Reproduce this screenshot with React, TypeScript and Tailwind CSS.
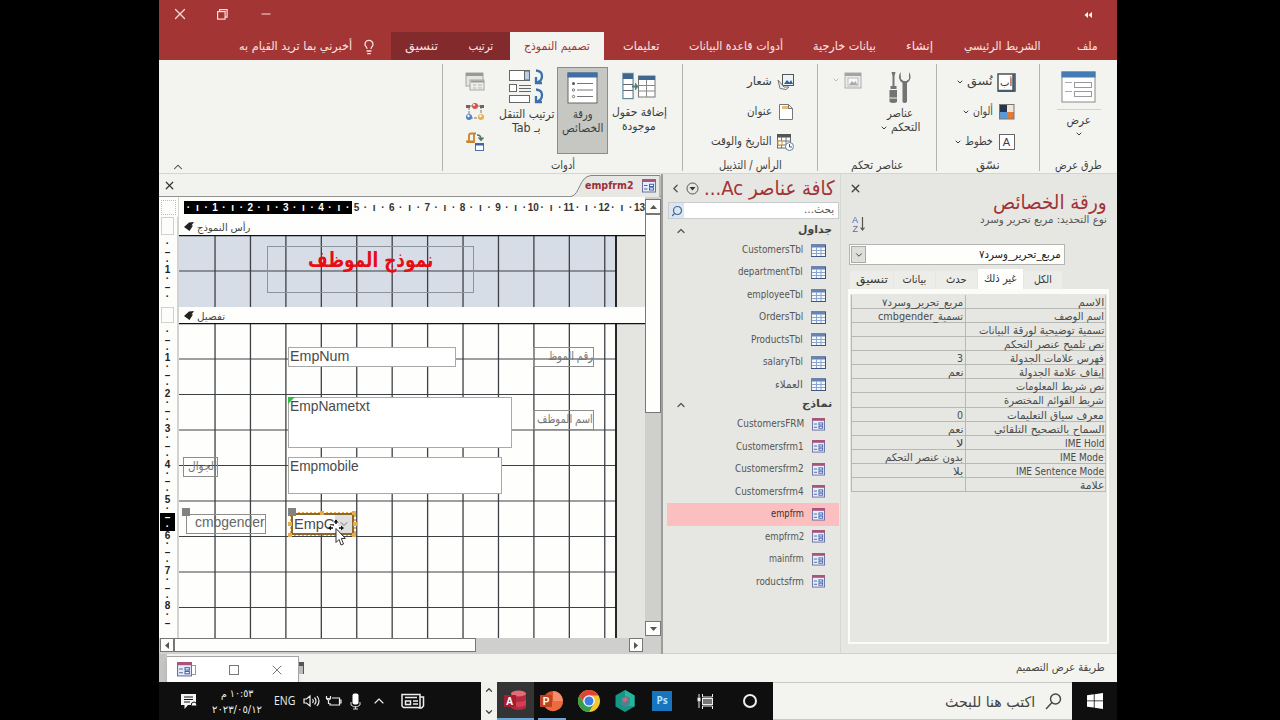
import { useLayoutEffect, useRef, useState } from "react"
import type { ReactNode } from "react"
import { ChevronDown, ChevronLeft, ChevronUp, Lightbulb, Minus, Search, X } from "lucide-react"

type FitProps = { w: number; children: ReactNode; className?: string; dir?: "rtl" | "ltr" }

// Squeezes a label horizontally so that it takes exactly w pixels
function Fit({ w, children, className = "", dir = "rtl" }: FitProps) {
  const ref = useRef<HTMLSpanElement>(null)
  const [scale, setScale] = useState(1)

  useLayoutEffect(() => {
    if (ref.current) setScale(w / ref.current.offsetWidth)
  }, [w, children])

  return (
    <span dir="ltr" className={`flex shrink-0 items-center whitespace-nowrap ${className}`} style={{ width: w }}>
      <span ref={ref} dir={dir} className="inline-block shrink-0 origin-left" style={{ transform: `scaleX(${scale})` }}>
        {children}
      </span>
    </span>
  )
}

function TableIcon() {
  return (
    <svg width="15" height="13" viewBox="0 0 15 13" className="shrink-0">
      <rect x="0.5" y="0.5" width="14" height="12" fill="#f4f8fd" stroke="#6d83a8" />
      <rect x="1" y="1" width="13" height="2.5" fill="#6684b4" />
      <path d="M1 6.5h13M1 9.5h13M5.5 3v9M10 3v9" stroke="#8aa6cf" />
      <path d="M0 12.5h15M14.5 1v12" stroke="#3f5580" />
    </svg>
  )
}

function FormIcon({ size = 14 }: { size?: number }) {
  return (
    <svg width={size} height={size} viewBox="0 0 14 14" className="shrink-0">
      <rect x="0.5" y="0.5" width="13" height="12.5" fill="#e6edf9" stroke="#6b6f9e" />
      <rect x="0" y="0" width="14" height="3" fill="#a6557b" />
      <path d="M2 6.5h3.5M2 10h3.5" stroke="#4a66a8" />
      <rect x="7.5" y="5.3" width="4" height="2.2" fill="#fff" stroke="#3e5fae" />
      <rect x="7.5" y="8.8" width="4" height="2.2" fill="#fff" stroke="#3e5fae" />
    </svg>
  )
}

function TitleBar() {
  return (
    <div className="flex h-8 items-center bg-[#a33635] text-[#fbdcda]">
      <X className="ml-3 size-[18px] -translate-y-0.5" strokeWidth={1.6} />
      <svg width="11" height="11" viewBox="0 0 11 11" className="ml-[28px] -translate-y-[2px]" fill="none" stroke="#fbdcda" strokeWidth="1.200">
        <rect x="0.600" y="2.600" width="7.500" height="7.500" />
        <path d="M2.600 2.600V.6h7.500v7.500H8" />
      </svg>
      <Minus className="ml-[31px] size-[14px] -translate-y-0.5" strokeWidth={1.8} />
      <svg width="8" height="6" viewBox="0 0 8 6" className="ml-[811px] -translate-y-px">
        <path d="M4 0v6L0.5 3zM8 0v6L4.500 3z" fill="#fff" />
      </svg>
    </div>
  )
}

const tabs = [
  { text: "تنسيق", w: 33, cell: "w-[61px] bg-[#832a2d]" },
  { text: "ترتيب", w: 25, cell: "w-[58px] bg-[#832a2d]" },
  { text: "تصميم النموذج", w: 66, cell: "w-[94px] bg-[#f3f4ef] text-[#9c3437]" },
  { text: "تعليمات", w: 36, cell: "w-[74px]" },
  { text: "أدوات قاعدة البيانات", w: 94, cell: "w-[116px]" },
  { text: "بيانات خارجية", w: 63, cell: "w-[101px]" },
  { text: "إنشاء", w: 27, cell: "w-[49px]" },
  { text: "الشريط الرئيسي", w: 77, cell: "w-[116px]" },
  { text: "ملف", w: 21, cell: "w-[54px]" },
]

function TabBar() {
  return (
    <div className="flex h-7 bg-[#a33635] text-[11.5px] text-[#fbe4e2]">
      <div className="flex w-[232px] items-center pt-[2px]">
        <Fit w={113} className="ml-[80px]">أخبرني بما تريد القيام به</Fit>
        <Lightbulb className="ml-[9px] size-4" strokeWidth={1.9} />
      </div>
      {tabs.map((t) => (
        <div key={t.text} className={`flex items-center justify-center pt-[2px] ${t.cell}`}>
          <Fit w={t.w}>{t.text}</Fit>
        </div>
      ))}
    </div>
  )
}

function Group({ label, w, className, children }: { label: string; w: number; className: string; children: ReactNode }) {
  return (
    <div className={`my-1 flex h-[107px] flex-col border-l border-[#b4b5b1] ${className}`}>
      <div className="flex h-[94px] shrink-0">{children}</div>
      <div className="flex justify-center">
        <Fit w={w} className="h-[16px]">{label}</Fit>
      </div>
    </div>
  )
}

function ToolsGroup() {
  return (
    <Group label="أدوات" w={24} className="w-[240px]">
      <div className="flex w-[56px] flex-col items-end gap-[10px] pt-2 pr-[14px]">
        <svg width="20" height="20" viewBox="0 0 20 20">
          <rect x="1" y="1" width="17" height="13" fill="#e4e4e2" stroke="#a6a6a6" />
          <path d="M1 2.500h17" stroke="#999" strokeWidth="3" />
          <rect x="5" y="8" width="14" height="10" fill="#ededeb" stroke="#a6a6a6" />
          <path d="M6 9.500h13" stroke="#999" strokeWidth="2" />
          <path d="M8 13h3M13 13h4M8 16h3M13 16h4" stroke="#b5b5b5" />
        </svg>
        <svg width="20" height="20" viewBox="0 0 20 20">
          <path d="M4 4h12v12H4z" fill="none" stroke="#777" strokeDasharray="3 1" />
          <path d="M1 3h4v3H1zM15 3h4v3h-4z" fill="#7a6258" />
          <circle cx="10" cy="4" r="3" fill="#d5564b" />
          <circle cx="4" cy="15" r="3" fill="#4d82c0" />
          <circle cx="16" cy="15" r="3" fill="#e8b04b" />
          <circle cx="9" cy="3" r="1" fill="#fff" />
          <circle cx="3.500" cy="14" r="1.200" fill="#fff" />
          <circle cx="15.500" cy="14" r="1.200" fill="#fff" />
        </svg>
        <svg width="20" height="20" viewBox="0 0 20 20">
          <path d="M4 10V3.500Q4 1.500 6 1.500h5M9 2v8H2" fill="none" stroke="#c9832f" strokeWidth="1.800" />
          <path d="M1 9.500h7" stroke="#c9832f" strokeWidth="2" />
          <path d="M12 3q4 0 4 4M13.500 5.500L16 8l2.500-2.500" fill="none" stroke="#51746e" strokeWidth="1.600" />
          <rect x="10.500" y="11.500" width="8" height="7" fill="#fff" stroke="#4b6fae" />
          <path d="M10 12.500h9" stroke="#3c62a6" strokeWidth="2" />
        </svg>
      </div>
      <div className="flex w-[58px] flex-col items-center pt-[5px] pr-1">
        <svg width="36" height="35" viewBox="0 0 36 35">
          <rect x="1.500" y="1.500" width="20" height="10" fill="#fff" stroke="#666" />
          <rect x="16.500" y="2" width="5" height="9" fill="#b8cde6" stroke="#666" />
          <rect x="1.500" y="15.500" width="7" height="7" fill="#fff" stroke="#666" />
          <path d="M11 16.500h12M11 19.500h12M11 22.500h12" stroke="#666" />
          <rect x="1.500" y="26.500" width="20" height="7" fill="#fff" stroke="#666" />
          <path
            d="M28 1.500Q34 2 34 7t-5 6.500M28 8v6h6M28 20.500q6 .5 6 5.500t-5 6.500M28 27v6h6"
            fill="none"
            stroke="#3a70ae"
            strokeWidth="2.300"
          />
        </svg>
        <Fit w={55} className="mt-1 h-[14px]">ترتيب التنقل</Fit>
        <Fit w={29} className="h-[14px]">بـ Tab</Fit>
      </div>
      <div className="mt-[3px] flex h-[87px] w-[51px] flex-col items-center border border-[#8b8c89] bg-[#c6c7c3] pt-1">
        <svg width="31" height="32" viewBox="0 0 31 32">
          <rect x="1" y="1" width="29" height="30" fill="#fff" stroke="#666" />
          <rect x="0.500" y="0.500" width="30" height="5" fill="#3f6ea9" />
          <path d="M10 11.500h16M10 18h16M10 24.500h16" stroke="#777" />
          <circle cx="6.500" cy="11.500" r="1.500" fill="#555" />
          <circle cx="6.500" cy="18" r="1.200" fill="#fff" stroke="#777" />
          <circle cx="6.500" cy="24.500" r="1.200" fill="#fff" stroke="#777" />
        </svg>
        <Fit w={20} className="mt-1 h-[14px]">ورقة</Fit>
        <Fit w={41} className="h-[14px]">الخصائص</Fit>
      </div>
      <div className="flex w-[62px] flex-col items-center pt-[8px]">
        <svg width="34" height="28" viewBox="0 0 34 28">
          <rect x="0" y="0.500" width="12" height="27" fill="#b5cfe0" />
          <rect x="1" y="1.500" width="10" height="25" fill="#fff" stroke="#5d8797" />
          <rect x="1" y="2" width="10" height="5" fill="#40688e" />
          <path d="M1 12.500h10M1 18.500h10" stroke="#667" />
          <rect x="16.500" y="4" width="16.500" height="21" fill="#fff" stroke="#777" />
          <rect x="16.500" y="4" width="16.500" height="4" fill="#40688e" />
          <path d="M16 13.500h17M16 19h17M24.500 8v17" stroke="#888" />
          <path d="M10 13.500h3v-3l3.500 4-3.500 4v-3h-3z" fill="#4b8474" />
        </svg>
        <Fit w={55} className="mt-[6px] h-[14px]">إضافة حقول</Fit>
        <Fit w={34} className="h-[14px]">موجودة</Fit>
      </div>
    </Group>
  )
}

function SmallRow({ text, w, arrow, children }: { text: string; w: number; arrow?: boolean; children: ReactNode }) {
  return (
    <div className="flex h-[30px] items-center justify-end">
      {arrow && <ChevronDown className="mr-[3px] size-2" strokeWidth={3} />}
      <Fit w={w}>{text}</Fit>
      <div className="ml-1 flex w-[19px] justify-center">{children}</div>
    </div>
  )
}

function Ribbon() {
  return (
    <div className="flex h-[114px] border-b border-[#d4d5d0] bg-[#f3f4ef] text-[11.5px] text-[#3d3d3d]">
      <div className="flex w-[283px] items-end pl-3">
        <ChevronUp className="size-3.5 translate-y-px" strokeWidth={1.8} />
      </div>
      <ToolsGroup />
      <Group label="الرأس / التذييل" w={63} className="w-[135px]">
        <div className="flex w-[112px] flex-col pt-[3px]">
          <SmallRow text="شعار" w={25}>
            <svg width="18" height="18" viewBox="0 0 18 18">
              <rect x="5.500" y="1.500" width="11" height="11" fill="#eef3f8" stroke="#555" />
              <path d="M7 11l3-4 2.500 2.500L14 7l2 4z" fill="#2d629c" />
              <path d="M1 7l6 7 5 0-3 2.500-6-1z" fill="#eee" stroke="#777" />
            </svg>
          </SmallRow>
          <SmallRow text="عنوان" w={25}>
            <svg width="16" height="18" viewBox="0 0 16 18">
              <path d="M1.500 1.500h9l4 4v11h-13z" fill="#fff" stroke="#777" />
              <path d="M4 3h6l3 3H4z" fill="#e6ba7d" />
              <path d="M10.500 1.500v4h4" fill="none" stroke="#777" />
            </svg>
          </SmallRow>
          <SmallRow text="التاريخ والوقت" w={61}>
            <svg width="19" height="19" viewBox="0 0 19 19">
              <rect x="1.500" y="2" width="13" height="13" fill="#fff" stroke="#666" />
              <rect x="1" y="1" width="14" height="3.500" fill="#555" />
              <path d="M5.500 4v11M10 4v11M1 8h14M1 12h14" stroke="#777" />
              <rect x="2" y="8" width="4" height="4" fill="#fff" stroke="#cc942e" />
              <circle cx="13.500" cy="13.500" r="4" fill="#fff" stroke="#5d82a7" />
              <path d="M13.500 11v3h2.500" fill="none" stroke="#456" />
            </svg>
          </SmallRow>
        </div>
      </Group>
      <Group label="عناصر تحكم" w={52} className="w-[119px]">
        <div className="flex w-[56px] items-start pt-2 pl-[14px]">
          <ChevronDown className="mt-1 mr-1 size-2 text-[#bbb]" strokeWidth={3} />
          <svg width="18" height="17" viewBox="0 0 18 17">
            <rect x="1" y="1" width="16" height="15" fill="#ececea" stroke="#adadad" />
            <path d="M1 2.500h16" stroke="#a3a3a3" strokeWidth="3" />
            <rect x="4" y="6" width="10" height="8" fill="#f8f8f8" stroke="#bbb" />
            <path d="M5 13l3-4 2 2 1.500-2 2 4z" fill="#aaa" />
          </svg>
        </div>
        <div className="flex flex-col items-center pt-[7px] pl-[6px]">
          <svg width="24" height="33" viewBox="0 0 24 33" fill="#737373">
            <path d="M3.500 1h4l-1 4v10h-2V5zM2.500 15h6v3h-6zM1.500 19h7.500v12q-3.500 2-7.500 0z" />
            <path d="M1.500 27h8" stroke="#f3f4ef" />
            <path d="M12.500 1q-2 3-1.500 6t3.500 5V31q2 2 4.500 0V12q3-2 3.500-5T21 1v7l-2.500 2h-3L13 8z" />
          </svg>
          <Fit w={26} className="mt-[3px] h-[14px]">عناصر</Fit>
          <div className="flex items-center">
            <ChevronDown className="mr-[3px] size-2" strokeWidth={3} />
            <Fit w={29} className="h-[14px]">التحكم</Fit>
          </div>
        </div>
      </Group>
      <Group label="نسّق" w={24} className="w-[103px]">
        <div className="flex w-[79px] flex-col pt-[3px]">
          <SmallRow arrow text="نُسق" w={26}>
            <svg width="19" height="19" viewBox="0 0 19 19">
              <rect x="1" y="1" width="17" height="17" fill="#fff" stroke="#4b5157" strokeWidth="1.500" />
              <path d="M16.500 1v17H1" fill="none" stroke="#4b5a6a" strokeWidth="2.500" />
              <text x="3" y="13" fontSize="10" fill="#333" fontFamily="DejaVu Sans">أب</text>
            </svg>
          </SmallRow>
          <SmallRow arrow text="ألوان" w={20}>
            <svg width="16" height="16" viewBox="0 0 16 16">
              <path d="M0 0h8v8H0z" fill="#28334c" />
              <path d="M8 0h7v8H8z" fill="#efe6da" />
              <path d="M0 8h8v7H0z" fill="#5b99d5" />
              <path d="M8 8h7v7H8z" fill="#e27a34" />
              <rect x="0.500" y="0.500" width="14.500" height="14.500" fill="none" stroke="#777" />
            </svg>
          </SmallRow>
          <SmallRow arrow text="خطوط" w={28}>
            <span className="flex size-4 items-center justify-center border border-[#666] bg-white font-['Liberation_Sans'] text-[11px] leading-none">
              A
            </span>
          </SmallRow>
        </div>
      </Group>
      <Group label="طرق عرض" w={47} className="w-[78px]">
        <div className="flex w-full flex-col items-center pt-[7px]">
          <svg width="35" height="32" viewBox="0 0 35 32">
            <rect x="1" y="1" width="33" height="30" fill="#fff" stroke="#888" />
            <rect x="0.500" y="0.500" width="34" height="6" fill="#437bb5" />
            <rect x="13.500" y="11.500" width="17" height="5" fill="#fff" stroke="#999" />
            <rect x="13.500" y="20.500" width="17" height="5" fill="#fff" stroke="#999" />
            <path d="M4 11.500h7M4 20.500h7" stroke="#aaa" />
          </svg>
          <div className="mt-[6px] w-[44px] border-t border-[#d2d3ce]" />
          <Fit w={24} className="mt-[4px] h-[14px]">عرض</Fit>
          <ChevronDown className="mt-[2px] size-2" strokeWidth={3} />
        </div>
      </Group>
    </div>
  )
}

const rulerMark = (k: number, tick: string) => (k % 4 === 0 ? String(k / 4) : k % 2 === 0 ? tick : "·")

function TopRuler() {
  const marks = Array.from({ length: 52 }, (_, i) => i + 1)
  return (
    <div className="flex h-[20px] items-center overflow-hidden bg-[#fdfdfb]">
      <div className="ml-0.5 h-[15px] w-[15px] border border-dotted border-[#bbb]" />
      <div className="ml-[2px] h-full w-[6px] border-l border-[#d5d5d2]" />
      <div className="flex h-[13px] font-['Liberation_Sans'] text-[10px] font-semibold">
        {marks.map((k) => (
          <span
            key={k}
            className={`flex w-[8.857px] items-center justify-center overflow-visible ${k < 20 ? "bg-black text-white" : "text-[#333]"}`}
          >
            {rulerMark(k, "ı")}
          </span>
        ))}
      </div>
    </div>
  )
}

function SideMarks({ count }: { count: number }) {
  const marks = Array.from({ length: count }, (_, i) => i + 1)
  return (
    <div className="flex flex-col pt-[4.4px]">
      {marks.map((k) => (
        <span
          key={k}
          className={`flex h-[8.87px] w-[15px] shrink-0 items-center justify-center ${count > 8 && (k === 22 || k === 23) ? "bg-black text-white" : "text-[#222]"}`}
        >
          {rulerMark(k, "–")}
        </span>
      ))}
    </div>
  )
}

function SideRuler() {
  return (
    <div className="flex h-[421px] w-[20px] flex-col overflow-hidden border-r-2 border-[#d3d3d0] bg-[#fdfdfb] pl-px font-['Liberation_Sans'] text-[10px] leading-none font-semibold">
      <div className="ml-px h-[18px] w-[13px] shrink-0 border border-[#d0d0cd]" />
      <div className="h-[72px] shrink-0">
        <SideMarks count={7} />
      </div>
      <div className="ml-px h-[16px] w-[13px] shrink-0 border border-[#d0d0cd]" />
      <SideMarks count={34} />
    </div>
  )
}

function SectionBar({ text, w }: { text: string; w: number }) {
  return (
    <div className="flex h-full items-center bg-[#fefefc] pt-0.5 text-[10px] text-[#444]">
      <svg width="10" height="10" viewBox="0 0 10 10" className="mr-[3px] ml-[5px]">
        <path d="M0 5l5-4.500L10 0 7.500 3.500H9L5.500 9z" fill="#222" />
      </svg>
      <Fit w={w}>{text}</Fit>
    </div>
  )
}

const columns = Array.from({ length: 12 }, (_, i) => 0.6 + 35.43 * (i + 1))

function Grid({ height, fill }: { height: number; fill: string }) {
  const rows = Array.from({ length: Math.floor(height / 35.5) }, (_, i) => 0.5 + 35.5 * (i + 1)).filter((y) => y < height - 3)
  return (
    <svg width="466" height={height} className="block">
      <rect width="437" height={height} fill={fill} />
      <rect x="437" width="29" height={height} fill="#e4e5e0" />
      {columns.map((x) => (
        <path key={x} d={`M${x} 0V${height}`} stroke="#3d4145" strokeWidth="1.300" />
      ))}
      {rows.map((y) => (
        <path key={y} d={`M0 ${y}H437`} stroke="#3d4145" strokeWidth="1.200" />
      ))}
      <path d={`M437 0V${height}`} stroke="#111" strokeWidth="1.800" />
      <path d="M0 0.500H466" stroke="#111" strokeWidth="1.600" />
    </svg>
  )
}

function FormCanvas() {
  return (
    <div className="relative h-[421px] w-[466px] overflow-hidden font-['Liberation_Sans','DejaVu_Sans',sans-serif] text-[14.5px] leading-[17px] text-[#4a4a4a]">
      <div className="h-[18px]"><SectionBar text="رأس النموذج" w={53} /></div>
      <Grid height={72} fill="#d7dde7" />
      <div className="h-[16px]"><SectionBar text="تفصيل" w={28} /></div>
      <Grid height={315} fill="#fefefd" />

      <div className="absolute top-[29px] left-[88px] h-[47px] w-[207px] border border-[#8c939b]">
        <Fit w={125} className="ml-[40px] h-[27px] font-['DejaVu_Sans'] text-[21px] font-bold text-[#e80c14]">نموذج الموظف</Fit>
      </div>

      <div className="absolute top-[130px] left-[109px] h-[20px] w-[168px] border border-[#a9a9a9] bg-white pl-px">
        <Fit w={59} dir="ltr">EmpNum</Fit>
      </div>
      <div className="absolute top-[130px] left-[354px] flex h-[20px] w-[61px] justify-end border border-[#8d8d8d]">
        <Fit w={45} className="h-[16px] text-[12px] text-[#777]">رقم الموظ</Fit>
      </div>

      <div className="absolute top-[180px] left-[109px] h-[51px] w-[224px] border border-[#a9a9a9] bg-white pl-px">
        <Fit w={80} dir="ltr">EmpNametxt</Fit>
      </div>
      <svg width="7" height="7" className="absolute top-[180px] left-[109px]"><path d="M0 0h7L0 7z" fill="#2fc043" /></svg>
      <div className="absolute top-[193px] left-[354px] flex h-[20px] w-[61px] justify-end border border-[#8d8d8d]">
        <Fit w={56} className="h-[16px] text-[12px] text-[#777]">اسم الموظف</Fit>
      </div>

      <div className="absolute top-[240px] left-[4px] flex h-[20px] w-[35px] justify-end border border-[#8d8d8d]">
        <Fit w={29} className="h-[16px] text-[12px] text-[#777]">الجوال</Fit>
      </div>
      <div className="absolute top-[240px] left-[109px] h-[37px] w-[214px] border border-[#a9a9a9] bg-white pl-px">
        <Fit w={69} dir="ltr">Empmobile</Fit>
      </div>

      <div className="absolute top-[297px] left-[7px] flex h-[20px] w-[80px] justify-end border border-[#8d8d8d] text-[#666]">
        <Fit w={70} dir="ltr" className="h-[15px]">cmbgender</Fit>
      </div>
      <div className="absolute top-[291px] left-[3px] size-2 bg-[#828282]" />

      <div className="absolute top-[295px] left-[111px] h-[24px] w-[66px] border-2 border-dotted border-[#e5ab4e]" />
      <div className="absolute top-[296px] left-[112px] flex h-[22px] w-[63px] items-center border-2 border-[#8a692f] bg-white pl-px">
        <Fit w={41} dir="ltr">EmpG</Fit>
        <div className="flex h-full flex-1 items-center justify-center bg-[#dfdfdf]">
          <ChevronDown className="size-3 text-[#777]" strokeWidth={2} />
        </div>
      </div>
      <div className="absolute top-[291px] left-[109px] size-2 bg-[#828282]" />
      <div className="absolute top-[294px] left-[141px] size-1 bg-[#e5ab4e]" />
      <div className="absolute top-[294px] left-[173px] size-1 bg-[#e5ab4e]" />
      <div className="absolute top-[305px] left-[174px] size-1 bg-[#e5ab4e]" />
      <div className="absolute top-[316px] left-[173px] size-1 bg-[#e5ab4e]" />
      <div className="absolute top-[305px] left-[109px] size-1 bg-[#e5ab4e]" />
      <div className="absolute top-[316px] left-[109px] size-1 bg-[#e5ab4e]" />

      <svg width="20" height="28" viewBox="0 0 20 28" className="absolute top-[302px] left-[148px]">
        <path d="M9 1v8M2 9h14" stroke="#fff" strokeWidth="4" />
        <path d="M9 1v4M3 9h3M12 9h3" stroke="#111" strokeWidth="1.500" />
        <path d="M6.500 3.500L9 .5l2.500 3zM4 6.500L1 9l3 2.500zM14 6.500L17 9l-3 2.500z" fill="#111" />
        <path d="M9 9.500v14l3-3 2 5.500 2.500-1-2.200-5.500h4z" fill="#fff" stroke="#333" />
      </svg>
    </div>
  )
}

const scrollButton = "flex shrink-0 items-center justify-center border border-[#777] bg-[#fdfdfb] text-[#555]"

function Designer() {
  return (
    <div className="flex h-[480px] w-[504px] flex-col border-r-2 border-[#9d9e9b]">
      <div className="flex h-[23px] justify-between border-b border-[#929390] bg-[#f2f3ee]">
        <X className="mt-[5px] ml-1 size-[13px] text-[#333]" strokeWidth={2.2} />
        <div className="relative h-[23px] w-[90px]">
          <svg width="90" height="23" className="absolute inset-0">
            <path d="M0 22.500C9 21 8 2.500 20 1.500H89V23H0z" fill="#e7e8e3" />
            <path d="M0 22.500C9 21 8 2.500 20 1.500H89V23" fill="none" stroke="#858683" />
          </svg>
          <div className="relative flex h-[23px] items-center pt-px pl-[14px]">
            <Fit w={49} dir="ltr" className="text-[11px] font-bold text-[#9b2f35]">empfrm2</Fit>
            <span className="ml-2"><FormIcon size={14} /></span>
          </div>
        </div>
      </div>
      <div className="flex">
        <div className="w-[486px] shrink-0 overflow-hidden">
          <TopRuler />
          <div className="flex">
            <SideRuler />
            <FormCanvas />
          </div>
        </div>
        <div className="flex h-[441px] w-4 shrink-0 flex-col bg-[#cfcfcd] pt-[2px]">
          <div className={`h-[15px] ${scrollButton}`}>
            <svg width="7" height="4"><path d="M0 4L3.500 0 7 4z" fill="#555" /></svg>
          </div>
          <div className="h-[199px] border border-[#777] bg-[#fefefd]" />
          <div className="flex-1" />
          <div className={`mb-[2px] h-[15px] ${scrollButton}`}>
            <svg width="7" height="4"><path d="M0 0h7L3.500 4z" fill="#555" /></svg>
          </div>
        </div>
      </div>
      <div className="flex h-4 bg-[#cfcfcd] pl-px">
        <div className={`h-[14px] w-[14px] ${scrollButton}`}>
          <svg width="4" height="7"><path d="M4 0v7L0 3.500z" fill="#555" /></svg>
        </div>
        <div className="h-[14px] w-[302px] border border-[#777] bg-[#fefefd]" />
        <div className="w-[153px]" />
        <div className={`h-[14px] w-[14px] ${scrollButton}`}>
          <svg width="4" height="7"><path d="M0 0v7l4-3.500z" fill="#555" /></svg>
        </div>
      </div>
    </div>
  )
}

const tables = [
  { name: "CustomersTbl", w: 61 },
  { name: "departmentTbl", w: 65 },
  { name: "employeeTbl", w: 56 },
  { name: "OrdersTbl", w: 44 },
  { name: "ProductsTbl", w: 52 },
  { name: "salaryTbl", w: 40 },
  { name: "العملاء", w: 28 },
]

const forms = [
  { name: "CustomersFRM", w: 67 },
  { name: "Customersfrm1", w: 68 },
  { name: "Customersfrm2", w: 69 },
  { name: "Customersfrm4", w: 69 },
  { name: "empfrm", w: 33 },
  { name: "empfrm2", w: 39 },
  { name: "mainfrm", w: 35 },
  { name: "roductsfrm", w: 48 },
]

function NavHeading({ text, w }: { text: string; w: number }) {
  return (
    <div className="flex h-[17px] items-center justify-between pr-[7px] pl-[8px] text-[11px] font-bold text-[#444]">
      <ChevronUp className="size-3 text-[#555]" strokeWidth={2.5} />
      <Fit w={w}>{text}</Fit>
    </div>
  )
}

function NavPane() {
  return (
    <div className="flex h-[480px] w-[178px] flex-col border-r border-[#d6d7d2] pr-px pl-1 text-[11px] text-[#555]">
      <div className="flex h-[28px] items-center pl-[2px]">
        <ChevronLeft className="size-[13px]" strokeWidth={2.5} />
        <svg width="13" height="13" viewBox="0 0 13 13" className="ml-1">
          <circle cx="6.500" cy="6.500" r="5.500" fill="none" stroke="#555" />
          <path d="M3.500 5h6l-3 3.500z" fill="#333" />
        </svg>
        <Fit w={131} className="ml-[5px] text-[20px] text-[#a23337]">كافة عناصر Ac...</Fit>
      </div>
      <div className="ml-px flex h-[17px] items-center justify-between border border-[#c9cccc] bg-white pr-1">
        <div className="flex h-full w-[15px] items-center justify-center bg-[#dce6ef]">
          <Search className="size-3 text-[#3a66a0]" strokeWidth={2.4} transform="scale(-1 1)" />
        </div>
        <Fit w={30} className="text-[11px]">بحث...</Fit>
      </div>
      <div className="mt-[3px]"><NavHeading text="جداول" w={34} /></div>
      {tables.map((t) => (
        <div key={t.name} className="flex h-[22.45px] shrink-0 items-center justify-end pr-[13px]">
          <Fit w={t.w}>{t.name}</Fit>
          <span className="ml-[8px]"><TableIcon /></span>
        </div>
      ))}
      <NavHeading text="نماذج" w={30} />
      {forms.map((f) => (
        <div
          key={f.name}
          className={`flex h-[22.5px] shrink-0 items-center justify-end pr-[14px] ${f.name === "empfrm" ? "bg-[#fcbfbf] text-[#333]" : ""}`}
        >
          <Fit w={f.w} dir="ltr">{f.name}</Fit>
          <span className="ml-[8px]"><FormIcon size={13} /></span>
        </div>
      ))}
    </div>
  )
}

const properties = [
  { name: "الاسم", w: 26, value: "مربع_تحرير_وسرد٧", vw: 81 },
  { name: "اسم الوصف", w: 50, value: "تسمية_cmbgender", vw: 85 },
  { name: "تسمية توضيحية لورقة البيانات", w: 125 },
  { name: "نص تلميح عنصر التحكم", w: 100 },
  { name: "فهرس علامات الجدولة", w: 94, value: "3", vw: 6 },
  { name: "إيقاف علامة الجدولة", w: 85, value: "نعم", vw: 15 },
  { name: "نص شريط المعلومات", w: 88 },
  { name: "شريط القوائم المختصرة", w: 100 },
  { name: "معرف سياق التعليمات", w: 97, value: "0", vw: 6 },
  { name: "السماح بالتصحيح التلقائي", w: 110, value: "نعم", vw: 15 },
  { name: "IME Hold", w: 39, value: "لا", vw: 7 },
  { name: "IME Mode", w: 44, value: "بدون عنصر التحكم", vw: 78 },
  { name: "IME Sentence Mode", w: 88, value: "بلا", vw: 10 },
  { name: "علامة", w: 24 },
]

const sheetTabs = [
  { text: "تنسيق", w: 32, cell: "w-[43px]" },
  { text: "بيانات", w: 24, cell: "w-[41px]" },
  { text: "حدث", w: 21, cell: "w-[41px]" },
  { text: "غير ذلك", w: 33, cell: "w-[45px] h-[20px] bg-[#fefefc]" },
  { text: "الكل", w: 18, cell: "w-[38px]" },
]

function PropertySheet() {
  return (
    <div className="ml-[7px] flex h-[480px] w-[262px] flex-col">
      <div className="flex h-[68px] justify-between pr-[3px]">
        <div className="flex flex-col pt-2 pl-px">
          <X className="size-[13px] text-[#444]" strokeWidth={2.5} />
          <svg width="18" height="20" viewBox="0 0 18 20" className="mt-[20px] ml-[3px]">
            <text x="0" y="8" fontSize="9" fill="#4a6cb0" fontFamily="Liberation Sans">A</text>
            <text x="0.500" y="17" fontSize="9" fill="#7a5fa8" fontFamily="Liberation Sans">Z</text>
            <path d="M10.500 2v13M8.500 12.500l2 2.500 2-2.500" fill="none" stroke="#555" strokeWidth="1.200" />
          </svg>
        </div>
        <div className="flex flex-col items-end pt-[15px]">
          <Fit w={114} className="h-[25px] text-[20px] text-[#a23337]">ورقة الخصائص</Fit>
          <Fit w={127} className="h-[11px] text-[10.5px] text-[#555]">نوع التحديد: مربع تحرير وسرد</Fit>
        </div>
      </div>
      <div className="mt-[2px] ml-px flex h-[21px] w-[216px] items-center justify-between border border-[#b4b5b2] bg-[#fefefd] pr-[3px] text-[11px] text-[#222]">
        <div className="ml-px flex h-[17px] w-[15px] items-center justify-center border border-[#aaa] bg-[#dededb]">
          <ChevronDown className="size-2.5" strokeWidth={2} />
        </div>
        <Fit w={82} className="h-[17px] leading-[17px]">مربع_تحرير_وسرد٧</Fit>
      </div>
      <div className="mt-[4px] flex h-[20px] items-end gap-px pl-[2px] text-[11px] text-[#333]">
        {sheetTabs.map((t) => (
          <div key={t.text} className={`flex h-[18px] items-center justify-center bg-[#ecede8] pt-px ${t.cell}`}>
            <Fit w={t.w}>{t.text}</Fit>
          </div>
        ))}
      </div>
      <div className="h-[355px] w-[261px] border-2 border-t-[5px] border-[#fbfcf8] px-px pt-px text-[10.5px] text-[#4a4a4a]">
        {properties.map((p) => (
          <div key={p.name} className="flex h-[14.07px] border-b border-[#b7b8b4] leading-[14px]">
            <div className="flex w-[115px] items-center justify-end border-r border-l border-[#b7b8b4] pr-[2px] pt-px">
              {p.value && <Fit w={p.vw!}>{p.value}</Fit>}
            </div>
            <div className="flex flex-1 items-center justify-end border-r border-[#c7c8c4] pt-px pr-[1px]">
              <Fit w={p.w}>{p.name}</Fit>
            </div>
          </div>
        ))}
      </div>
    </div>
  )
}

function StatusBar() {
  return (
    <div className="flex h-7 items-end justify-between bg-[#f3f4ef]">
      <div className="flex h-full items-end">
        <div className="h-full w-2 bg-[#c4c5c2]" />
        <div className="flex h-[26px] w-[132px] items-center border-t border-r border-[#a5a6a3] bg-white shadow-md">
          <span className="ml-[10px]"><FormIcon size={15} /></span>
          <span className="h-2.5 w-1 border border-l-0 border-[#999]" />
          <div className="ml-[33px] size-[10px] border border-[#777]" />
          <X className="ml-[30px] size-4 text-[#777]" strokeWidth={1.5} />
        </div>
        <div className="mb-2 h-3 w-[5px] border-t-4 border-r border-[#555] bg-[#bbb]" />
      </div>
      <Fit w={89} className="mr-3 h-full text-[10.5px] text-[#444]">طريقة عرض التصميم</Fit>
    </div>
  )
}

function OfficeTile({ letter, className, children }: { letter: string; className: string; children: ReactNode }) {
  return (
    <div className="relative size-6">
      <svg width="24" height="24" viewBox="0 0 24 24">{children}</svg>
      <span className={`absolute top-[6px] left-0 flex size-3 items-center justify-center font-['Liberation_Sans'] text-[10px] font-bold text-white ${className}`}>
        {letter}
      </span>
    </div>
  )
}

function Taskbar() {
  return (
    <div className="flex h-[38px] items-center bg-[#0f0f0f] text-[#eee]">
      <div className="flex w-[322px] items-center">
        <svg width="18" height="17" viewBox="0 0 18 17" className="ml-[21px]">
          <path d="M1 1h15v11H8l-3.500 4v-4H1z" fill="#f4f4f4" />
          <path d="M4 4h9M4 6.500h9M4 9h6" stroke="#111" />
          <path d="M11 13q0-4 3-4t3 4zM12.500 14.500h3" fill="#fff" stroke="#111" />
        </svg>
        <div className="ml-[14px] flex w-[50px] flex-col items-center text-[10.5px] leading-4">
          <Fit w={32}>١٠:٥٣ م</Fit>
          <Fit w={50}>٢٠٢٣/٠٥/١٢</Fit>
        </div>
        <Fit w={21} dir="ltr" className="ml-3 font-['Open_Sans'] text-[12px]">ENG</Fit>
        <svg width="18" height="14" viewBox="0 0 18 14" className="ml-[8px]" fill="none" stroke="#eee" strokeWidth="1.200">
          <path d="M1 5h2.500L7 2v10L3.500 9H1zM9.500 5q1.500 2 0 4M11.500 3.500q3 3.500 0 7M14 2q4 5 0 10" />
        </svg>
        <svg width="17" height="13" viewBox="0 0 17 13" className="ml-[4px]" fill="none" stroke="#eee" strokeWidth="1.200">
          <path d="M7 3h7.500v7H5V8M14.500 5h1.500v3h-1.500M1.500 1v2.500q2.500 3 4 0V1M1 3.500h5M3.500 5v4" />
        </svg>
        <svg width="11" height="17" viewBox="0 0 11 17" className="ml-[8px]">
          <rect x="2.500" y="0.500" width="6" height="11" rx="2" fill="#fff" />
          <path d="M1 9v3q4.500 4 9 0V9M5.500 13v3M3 16h5" fill="none" stroke="#ddd" />
        </svg>
        <ChevronUp className="ml-[10px] size-4" strokeWidth={1.7} />
        <svg width="24" height="17" viewBox="0 0 24 17" className="ml-[14px]" fill="none" stroke="#eee" strokeWidth="1.500">
          <path d="M1 1.500h18v13H2.500L1 13zM19 4h3.500v9l-2 2h-3M4 4.500h12M12 8h5M12 11h5" />
          <path d="M4.500 8h5v3.500h-5z" />
        </svg>
      </div>
      <div className="flex h-full w-[16px] flex-col items-center justify-between bg-[#f1f2ee] py-[3px] text-[#444]">
        <ChevronUp className="size-2.5" strokeWidth={3} />
        <ChevronDown className="size-2.5" strokeWidth={3} />
      </div>
      <div className="flex h-full w-[37px] items-center justify-center border-b-2 border-[#6ca5d3] bg-[#343434] pt-[2px]">
        <OfficeTile letter="A" className="bg-[#a51d2f]">
          <path d="M7 4v15q7.500 4 15 0V4z" fill="#b52a41" />
          <ellipse cx="14.500" cy="4.500" rx="7.500" ry="3" fill="#e56b78" />
          <path d="M7 11q7.500 4 15 0v5q-7.500 4-15 0z" fill="#d43e54" />
        </OfficeTile>
      </div>
      <div className="mx-1 flex h-full w-[28px] items-center justify-center border-b-2 border-[#6ca5d3] pt-[2px]">
        <OfficeTile letter="P" className="bg-[#c2411f]">
          <circle cx="13" cy="12" r="10" fill="#d9532f" />
          <path d="M13 2a10 10 0 0 1 10 10H13z" fill="#f48e6b" />
          <path d="M23 12a10 10 0 0 1-18 6l8-6z" fill="#eb6b40" />
        </OfficeTile>
      </div>
      <svg width="24" height="24" viewBox="0 0 24 24" className="ml-[7px]">
        <circle cx="12" cy="12" r="11" fill="#f5c72e" />
        <path d="M2.500 6.500A11 11 0 0 1 21.500 6.500H12L7 14z" fill="#df4537" />
        <path d="M2.500 6.500A11 11 0 0 0 12 23l5-8.500-10 0z" fill="#359c50" />
        <circle cx="12" cy="12" r="5.800" fill="#fff" />
        <circle cx="12" cy="12" r="4.500" fill="#3d7de8" />
      </svg>
      <svg width="22" height="22" viewBox="0 0 22 22" className="ml-[13px]">
        <path d="M11 0l9.500 5.500v11L11 22l-9.500-5.500v-11z" fill="#159785" />
        <path d="M11 0l9.500 5.500v11L11 15z" fill="#24b79c" />
        <path d="M7 9l5-3 4 2v6l-5 3-4-3z" fill="#557f91" />
        <path d="M8 9l4-2 2 3-4 2z" fill="#d76478" />
      </svg>
      <div className="ml-[16px] flex size-5 items-start justify-center bg-[#1675bd] pt-0.5 font-['Open_Sans'] text-[10px] leading-[14px] font-bold text-[#b6e2fc]">
        Ps
      </div>
      <svg width="17" height="15" viewBox="0 0 17 15" className="ml-[25px]" fill="none" stroke="#eee">
        <path d="M2 0v3M2 8v6M5.500 0v3h10V0M5.500 15v-3h10v3" />
        <rect x="5.500" y="4.500" width="10" height="6" fill="#777" />
        <rect x="1" y="4" width="2" height="3" fill="#fff" />
      </svg>
      <div className="ml-[29px] size-[14px] rounded-full border-2 border-[#eee]" />
      <div className="ml-auto flex h-full w-[299px] items-center justify-end border-y border-[#c9cac6] bg-[#f3f4ef] pr-[10px] text-[#444]">
        <Fit w={90} className="pt-[3px] text-[14.5px]">اكتب هنا للبحث</Fit>
        <svg width="17" height="17" viewBox="0 0 17 17" className="ml-[10px]" fill="none" stroke="#444" strokeWidth="1.400">
          <circle cx="10.500" cy="6" r="5" />
          <path d="M7 9.500L1 16" />
        </svg>
      </div>
      <div className="flex w-[45px] justify-center">
        <svg width="16" height="16" viewBox="0 0 16 16" fill="#fff">
          <path d="M0 2.200L6.800 1.300v6.200H0zM7.600 1.200L16 0v7.500H7.600zM0 8.300h6.800v6.300L0 13.700zM7.600 8.300H16V16l-8.400-1.200z" />
        </svg>
      </div>
    </div>
  )
}

export default function App() {
  return (
    <div className="flex h-[720px] w-[1280px] overflow-hidden bg-black pl-[159px] font-['DejaVu_Sans_Condensed','DejaVu_Sans',sans-serif]">
      <div className="flex w-[958px] flex-col overflow-hidden">
        <TitleBar />
        <TabBar />
        <Ribbon />
        <div className="flex h-[480px] border-b border-[#cfd0cb] bg-[#e6e7e2]">
          <Designer />
          <NavPane />
          <PropertySheet />
        </div>
        <StatusBar />
        <Taskbar />
      </div>
    </div>
  )
}
